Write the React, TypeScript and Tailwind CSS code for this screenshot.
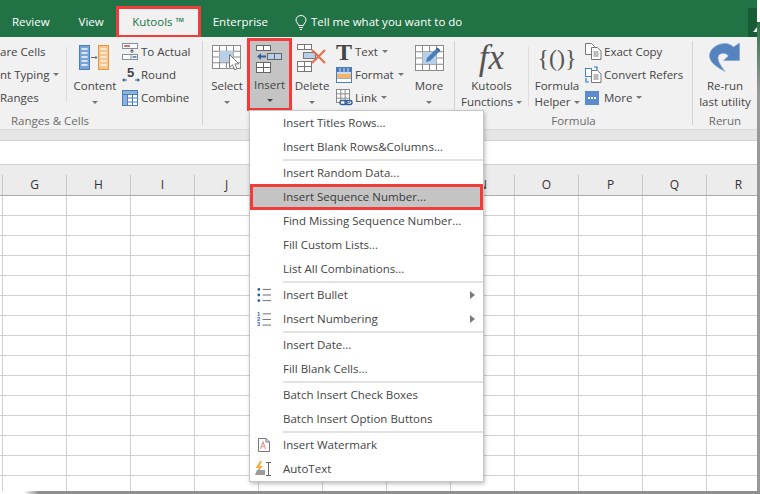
import type { ReactNode } from "react";

// K, L and M sit under the open menu, so their header labels never show
const columns = ["G", "H", "I", "J", "", "", "", "N", "O", "P", "Q", "R"];
const rows = Array.from({ length: 15 }, (_, i) => i);

function Caret({ dark }: { dark?: boolean }) {
  return (
    <svg width="6" height="3" viewBox="0 0 6 3" className="inline-block shrink-0">
      <path d="M0 0h6L3 3z" fill={dark ? "#444" : "#777"} />
    </svg>
  );
}

function Table({ x, y, w, h, c, r, stroke = "#808080" }: { x: number; y: number; w: number; h: number; c: number; r: number; stroke?: string }) {
  const lines = [];
  for (let i = 1; i < c; i++) lines.push(<path key={"c" + i} d={`M${x + (w * i) / c} ${y}v${h}`} stroke={stroke} />);
  for (let i = 1; i < r; i++) lines.push(<path key={"r" + i} d={`M${x} ${y + (h * i) / r}h${w}`} stroke={stroke} />);
  return (
    <g fill="none" strokeWidth="1">
      <rect x={x} y={y} width={w} height={h} stroke={stroke} fill="#fff" />
      {lines}
    </g>
  );
}

function ContentIcon() {
  const dashes = [3, 7, 11, 15, 19];
  return (
    <svg width="32" height="26" viewBox="0 0 32 26">
      <rect x="0.5" y="0.5" width="10" height="24" fill="#7ba4d6" stroke="#4a7ebb" />
      <rect x="19.5" y="0.5" width="10" height="24" fill="#f6c48f" stroke="#e8963f" />
      {dashes.map((d) => (
        <g key={d}>
          <rect x="2.5" y={d} width="6" height="2" fill="#dbe6f4" />
          <rect x="21.5" y={d} width="6" height="2" fill="#fdebd6" />
        </g>
      ))}
      <path d="M12 12.5h5" stroke="#666" />
      <path d="M18.5 12.5l-2-1.7v3.4z" fill="#666" />
    </svg>
  );
}

function ToActualIcon() {
  return (
    <svg width="16" height="17" viewBox="0 0 16 17">
      <rect x="0.5" y="0.5" width="15" height="5" fill="#fff" stroke="#7f8ea3" />
      <path d="M2 3h6" stroke="#c0392b" strokeWidth="1.4" />
      <rect x="0.5" y="11.5" width="15" height="5" fill="#fff" stroke="#7f8ea3" />
      <path d="M9 11.5v5" stroke="#7f8ea3" />
      <path d="M10.5 14h4" stroke="#2f5f9e" strokeWidth="1.4" />
      <path d="M10 7v3M8.5 8.4L10 6.6l1.5 1.8" stroke="#444" fill="none" />
    </svg>
  );
}

function RoundIcon() {
  return (
    <svg width="18" height="18" viewBox="0 0 18 18">
      <text x="5" y="10.5" fontSize="13" fontWeight="700" fill="#444" fontFamily="Liberation Sans, sans-serif">5</text>
      <path d="M1 14h4M13 14h4" stroke="#2f5f9e" />
      <path d="M0 14l2.5-2v4zM18 14l-2.5-2v4z" fill="#2f5f9e" />
    </svg>
  );
}

function CombineIcon() {
  return (
    <svg width="16" height="16" viewBox="0 0 16 16">
      <rect x="0.5" y="0.5" width="15" height="15" fill="#fff" stroke="#4a7ebb" />
      <rect x="0.5" y="0.5" width="5" height="15" fill="#8db0dc" stroke="#4a7ebb" />
      <rect x="0.5" y="0.5" width="15" height="4" fill="#8db0dc" stroke="#4a7ebb" />
      <path d="M5.5 8h10M5.5 12h10M10.5 4.5v11" stroke="#4a7ebb" />
    </svg>
  );
}

function SelectIcon() {
  return (
    <svg width="30" height="26" viewBox="0 0 30 26">
      <Table x={0.5} y={0.5} w={28} h={23} c={4} r={4} stroke="#8a8a8a" />
      <rect x="7.5" y="6" width="14" height="11" fill="#b8cfe8" />
      <path d="M17.5 9.5v13l3-2.7 2.2 5 2.4-1-2.2-4.9h4z" fill="#fff" stroke="#777" />
    </svg>
  );
}

function InsertIcon() {
  return (
    <svg width="27" height="28" viewBox="0 0 27 28">
      <Table x={0.5} y={0.5} w={14} h={5} c={2} r={1} stroke="#666" />
      <rect x="11.5" y="8.5" width="14" height="6" fill="#b8cfe8" stroke="#666" />
      <path d="M18.5 8.5v6" stroke="#666" />
      <path d="M4 11.5h6" stroke="#2f5f9e" strokeWidth="2" />
      <path d="M1 11.5l4-3.2v6.4z" fill="#2f5f9e" />
      <Table x={0.5} y={17.5} w={14} h={10} c={2} r={2} stroke="#666" />
    </svg>
  );
}

function DeleteIcon() {
  return (
    <svg width="30" height="28" viewBox="0 0 30 28">
      <Table x={0.5} y={0.5} w={14} h={5} c={2} r={1} stroke="#777" />
      <rect x="6.5" y="8.5" width="12" height="6" fill="#b8cfe8" stroke="#777" />
      <Table x={0.5} y={17.5} w={14} h={10} c={2} r={2} stroke="#777" />
      <path d="M15 6l13 13M28 6L15 19" stroke="#e2714f" strokeWidth="2.2" />
    </svg>
  );
}

function FormatIcon() {
  return (
    <svg width="16" height="16" viewBox="0 0 16 16">
      <rect x="0.5" y="0.5" width="15" height="15" fill="#fff" stroke="#4a7ebb" />
      <rect x="1" y="1" width="14" height="4" fill="#4a7ebb" />
      <path d="M4 1v4M8 1v4M12 1v4" stroke="#cfe0f2" />
      <rect x="1" y="7" width="14" height="4" fill="#f1b469" />
      <path d="M1 6h14M1 11.5h14" stroke="#9fb6d2" />
    </svg>
  );
}

function LinkIcon() {
  return (
    <svg width="17" height="17" viewBox="0 0 17 17">
      <Table x={0.5} y={0.5} w={13} h={13} c={3} r={3} stroke="#8a8a8a" />
      <g fill="none" stroke="#2f5f9e" strokeWidth="1.4">
        <rect x="4" y="11.5" width="7" height="4" rx="2" fill="#fff" />
        <rect x="9" y="11.5" width="7" height="4" rx="2" />
      </g>
    </svg>
  );
}

function MoreIcon() {
  return (
    <svg width="29" height="26" viewBox="0 0 29 26">
      <Table x={0.5} y={0.5} w={28} h={25} c={4} r={4} stroke="#8a8a8a" />
      <rect x="7.5" y="7" width="14" height="12" fill="#b8cfe8" />
      <path d="M11 17l1-4 9-9 3 3-9 9z" fill="#4a7ebb" />
      <path d="M21 4l1.5-1.5 3 3L24 7z" fill="#2f5f9e" />
    </svg>
  );
}

function PageIcon() {
  return (
    <svg width="17" height="17" viewBox="0 0 17 17">
      <path d="M0.5 0.5h6l3 3v8h-9z" fill="#fff" stroke="#777" />
      <path d="M6.5 4.5h6l3.5 3.5v8.5h-9.5z" fill="#fff" stroke="#777" />
      <path d="M8.5 9h5M8.5 11h5M8.5 13h5" stroke="#777" />
    </svg>
  );
}

function ConvertIcon() {
  return (
    <svg width="17" height="17" viewBox="0 0 17 17">
      <rect x="0.5" y="2.5" width="6" height="8" fill="#fff" stroke="#4a7ebb" />
      <path d="M6.5 4.5h6l3.5 3.5v8.5h-9.5z" fill="#fff" stroke="#777" />
      <path d="M8.5 9h5M8.5 11h5M8.5 13h5" stroke="#777" />
      <path d="M9 1h3v3M1 12v4h3" fill="none" stroke="#2f7fc1" strokeWidth="1.2" />
    </svg>
  );
}

function DotsIcon() {
  return (
    <div className="flex h-[14px] w-[14px] items-center justify-center gap-px bg-[#5b8bd0]">
      <span className="h-[2px] w-[2px] bg-white" />
      <span className="h-[2px] w-[2px] bg-white" />
      <span className="h-[2px] w-[2px] bg-white" />
    </div>
  );
}

function RerunIcon() {
  return (
    <svg width="32" height="29" viewBox="0 0 32 29">
      <path
        d="M16 28.5C8 24 1 20 0.5 13 0.5 6 8 0.5 16 0.5c3.5 0 6 1.2 8.5 3.5L30.5 0v17.5h-16l5-4.5C17 9.5 12 9.5 9.5 12.5 7.5 16 11 22 16 28.5z"
        fill="#5583bd"
        stroke="#7fa3d1"
        strokeWidth="0.6"
      />
    </svg>
  );
}

function BulletIcon() {
  return (
    <svg width="14" height="16" viewBox="0 0 15 16">
      <circle cx="2" cy="2" r="1.5" fill="#2f5f9e" />
      <circle cx="2" cy="8" r="1.5" fill="#2f5f9e" />
      <circle cx="2" cy="14" r="1.5" fill="#2f5f9e" />
      <path d="M6 2h9M6 8h9M6 14h9" stroke="#666" />
    </svg>
  );
}

function NumberIcon() {
  return (
    <svg width="14" height="16" viewBox="0 0 15 16">
      <g fill="#2f5f9e" fontSize="6" fontWeight="700" fontFamily="Liberation Sans, sans-serif">
        <text x="0" y="5">1</text>
        <text x="0" y="10.5">2</text>
        <text x="0" y="16">3</text>
      </g>
      <path d="M6 2.5h9M6 8.5h9M6 14.5h9" stroke="#666" />
    </svg>
  );
}

function WatermarkIcon() {
  return (
    <svg width="12" height="14" viewBox="0 0 12 14">
      <path d="M0.5 0.5h7.5l3.5 3.5v9.5h-11z" fill="#fff" stroke="#777" />
      <path d="M8 0.5v3.5h3.5" fill="none" stroke="#777" />
      <path d="M2.5 11l2.5-7 2.5 7M3.5 8.5h3.5" fill="none" stroke="#e79a90" strokeWidth="1.2" />
    </svg>
  );
}

function AutoTextIcon() {
  return (
    <svg width="17" height="16" viewBox="0 0 17 16">
      <path d="M5 0L0.5 7h3L2 12l6-7H5l2-5z" fill="#f0b04a" />
      <path d="M2 9h8v5H0z" fill="#9a9a9a" />
      <path d="M11 1.5h5M13.5 1.5v13M11 14.5h5" stroke="#666" fill="none" />
    </svg>
  );
}

function BigButton({ icon, lines, caret = true, w, active }: { icon: ReactNode; lines: string[]; caret?: boolean; w: string; active?: boolean }) {
  return (
    <div
      className={`flex h-[73px] shrink-0 flex-col items-center ${w} ${
        active ? "border-[3px] border-[#f23b3b] bg-[#c4c4c4]" : ""
      }`}
    >
      <div className={`flex items-center justify-center ${active ? "h-[38px]" : "h-[41px]"}`}>{icon}</div>
      {lines.map((l, i) => (
        <div key={l} className="flex h-[16px] items-center gap-[3px] whitespace-nowrap leading-4">
          {l}
          {caret && i === 1 && <Caret />}
        </div>
      ))}
      {caret && lines.length === 1 && (
        <div className="flex h-[16px] items-center">
          <Caret dark={active} />
        </div>
      )}
    </div>
  );
}

function SmallRow({ icon, label, caret, iconW = "w-[19px]" }: { icon?: ReactNode; label: string; caret?: boolean; iconW?: string }) {
  return (
    <div className="flex h-[23px] items-center whitespace-nowrap">
      {icon && <div className={`flex shrink-0 items-center ${iconW}`}>{icon}</div>}
      <span>{label}</span>
      {caret && (
        <span className="ml-[4px] flex items-center">
          <Caret />
        </span>
      )}
    </div>
  );
}

function Group({ w, label, labelClass = "w-full", children, sep = true }: { w: string; label: string; labelClass?: string; children: ReactNode; sep?: boolean }) {
  return (
    <div className={`flex shrink-0 ${w}`}>
      <div className="flex min-w-0 flex-1 flex-col">
        <div className="flex h-[73px]">{children}</div>
        <div className={`h-[19px] pt-[2px] text-center leading-[17px] text-[#6b6b6b] ${labelClass}`}>{label}</div>
      </div>
      {sep && <div className="mt-[4px] mb-[4px] w-px shrink-0 bg-[#d2d2d2]" />}
    </div>
  );
}

function MenuItem({ icon, label, arrow, active }: { icon?: ReactNode; label: string; arrow?: boolean; active?: boolean }) {
  return (
    <div
      className={`flex items-center ${
        active ? "relative z-10 -my-px h-[26px] border-[3px] border-[#f23b3b] bg-[#c4c4c4] text-[#3a3a3a]" : "h-[24px]"
      }`}
    >
      <div className={`flex w-[33px] shrink-0 items-center justify-center pr-[6px] ${active ? "-ml-[3px]" : ""}`}>{icon}</div>
      <span className="flex-1 whitespace-nowrap">{label}</span>
      {arrow && (
        <svg width="5" height="8" viewBox="0 0 5 8" className="mr-[8px]">
          <path d="M0 0l5 4-5 4z" fill="#7a7a7a" />
        </svg>
      )}
    </div>
  );
}

function MenuSep() {
  return <div className="ml-[33px] h-[2px] bg-[#e2e2e2]" />;
}

export default function App() {
  return (
    <div className="relative h-[494px] w-[760px] overflow-hidden bg-white font-['Open_Sans','Noto_Sans',sans-serif] text-[11.5px] text-[#444]">
      <div className="h-[491px] w-[757px] overflow-hidden">
        {/* tabs */}
        <div className="flex h-[37px] items-center bg-[#217346] pt-[7px] text-white">
          <span className="ml-[12px]">Review</span>
          <span className="ml-[29px]">View</span>
          <div className="ml-[12px] flex h-[31px] w-[85px] items-center justify-center self-end border-[3px] border-b-[2px] border-[#f23b3b] bg-[#f1f1f1] text-[#217346]">
            Kutools ™
          </div>
          <span className="ml-[12px]">Enterprise</span>
          <svg width="12" height="15" viewBox="0 0 12 15" className="ml-[27px]">
            <path
              d="M3.5 10.5C3.5 8.5 1 7.5 1 5a5 4.5 0 0 1 10 0c0 2.5-2.5 3.5-2.5 5.5zM4 12.5h4M5 14.5h2"
              fill="none"
              stroke="#fff"
            />
          </svg>
          <span className="ml-[4px] whitespace-nowrap">Tell me what you want to do</span>
          <div className="ml-auto flex h-[29px] w-[9px] items-end justify-end self-end bg-[#185c37]">
            <svg width="4" height="5" viewBox="0 0 4 5" className="mb-[5px]">
              <path d="M4 0v5H0z" fill="#e8e8e8" />
            </svg>
          </div>
        </div>

        {/* ribbon */}
        <div className="flex h-[92px] bg-[#f1f1f1]">
          <Group w="w-[203px]" label="Ranges & Cells" labelClass="w-[100px]">
            <div className="flex w-[66px] shrink-0 flex-col overflow-hidden pt-[3px]">
              <SmallRow label="are Cells" />
              <SmallRow label="nt Typing" caret />
              <SmallRow label="Ranges" />
            </div>
            <div className="mt-[10px] mb-[8px] w-px shrink-0 bg-[#dcdcdc]" />
            <BigButton w="ml-[6px] w-[44px]" icon={<ContentIcon />} lines={["Content"]} />
            <div className="ml-[5px] flex flex-col pt-[3px]">
              <SmallRow icon={<ToActualIcon />} label="To Actual" />
              <SmallRow icon={<RoundIcon />} label="Round" />
              <SmallRow icon={<CombineIcon />} label="Combine" />
            </div>
          </Group>

          <Group w="w-[252px]" label="">
            <BigButton w="ml-[4px] w-[40px]" icon={<SelectIcon />} lines={["Select"]} />
            <BigButton w="mt-px w-[45px]" icon={<InsertIcon />} lines={["Insert"]} active />
            <BigButton w="w-[40px]" icon={<DeleteIcon />} lines={["Delete"]} />
            <div className="ml-[4px] flex w-[71px] shrink-0 flex-col pt-[3px]">
              <SmallRow
                icon={<span className="font-['Liberation_Serif',serif] text-[24px] leading-none font-bold text-[#444]">T</span>}
                label="Text"
                caret
              />
              <SmallRow icon={<FormatIcon />} label="Format" caret />
              <SmallRow icon={<LinkIcon />} label="Link" caret />
            </div>
            <BigButton w="w-[44px]" icon={<MoreIcon />} lines={["More"]} />
          </Group>

          <Group w="w-[238px]" label="Formula">
            <BigButton
              w="w-[73px]"
              icon={<span className="font-['Liberation_Serif',serif] text-[35px] leading-none text-[#555] italic">fx</span>}
              lines={["Kutools", "Functions"]}
            />
            <div className="mt-[10px] mb-[4px] w-px shrink-0 bg-[#dcdcdc]" />
            <BigButton
              w="ml-[3px] w-[50px]"
              icon={<span className="font-['Liberation_Serif',serif] text-[24px] leading-none text-[#555]">{"{()}"}</span>}
              lines={["Formula", "Helper"]}
            />
            <div className="ml-[3px] flex flex-col pt-[3px]">
              <SmallRow icon={<PageIcon />} label="Exact Copy" />
              <SmallRow icon={<ConvertIcon />} label="Convert Refers" />
              <SmallRow icon={<DotsIcon />} label="More" caret />
            </div>
          </Group>

          <Group w="w-[64px]" label="Rerun" sep={false}>
            <BigButton w="w-[64px]" icon={<RerunIcon />} lines={["Re-run", "last utility"]} caret={false} />
          </Group>
        </div>

        {/* formula bar */}
        <div className="h-[11px] border-t border-[#d8d8d8] bg-[#e6e6e6]" />
        <div className="h-[25px] border-t border-b border-[#cfcfcf] bg-white" />

        {/* column headers */}
        <div className="flex h-[31px] items-end border-b border-[#ababab] bg-[#ececec] pl-[2px] text-[12px] text-[#333]">
          {columns.map((c, i) => (
            <div key={i} className="flex h-[20px] w-[64px] shrink-0 items-center justify-center border-l border-[#c6c6c6]">
              {c}
            </div>
          ))}
        </div>

        {/* cells */}
        {rows.map((r) => (
          <div key={r} className="flex h-[20px] border-b border-[#d0d0d0] pl-[2px]">
            {columns.map((c, i) => (
              <div key={i} className="w-[64px] shrink-0 border-l border-[#d0d0d0]" />
            ))}
          </div>
        ))}
      </div>

      {/* Insert dropdown */}
      <div className="absolute top-[110px] left-[249px] w-[235px] border border-[#c6c6c6] bg-white shadow-[1px_2px_4px_rgba(0,0,0,0.25)]">
        <MenuItem label="Insert Titles Rows..." />
        <MenuItem label="Insert Blank Rows&Columns..." />
        <MenuSep />
        <MenuItem label="Insert Random Data..." />
        <MenuItem label="Insert Sequence Number..." active />
        <MenuItem label="Find Missing Sequence Number..." />
        <MenuItem label="Fill Custom Lists..." />
        <MenuItem label="List All Combinations..." />
        <MenuSep />
        <MenuItem label="Insert Bullet" icon={<BulletIcon />} arrow />
        <MenuItem label="Insert Numbering" icon={<NumberIcon />} arrow />
        <MenuSep />
        <MenuItem label="Insert Date..." />
        <MenuItem label="Fill Blank Cells..." />
        <MenuSep />
        <MenuItem label="Batch Insert Check Boxes" />
        <MenuItem label="Batch Insert Option Buttons" />
        <MenuSep />
        <MenuItem label="Insert Watermark" icon={<WatermarkIcon />} />
        <MenuItem label="AutoText" icon={<AutoTextIcon />} />
      </div>

      {/* torn edge shadows of the screenshot */}
      <div className="absolute top-[22px] right-0 bottom-0 w-[3px] bg-gradient-to-b from-[#217346] from-0% to-[#999] to-[15%]" />
      <div className="absolute right-0 bottom-0 left-[24px] h-[3px] bg-gradient-to-r from-white from-0% to-[#8f8f8f] to-[2%]" />
    </div>
  );
}
